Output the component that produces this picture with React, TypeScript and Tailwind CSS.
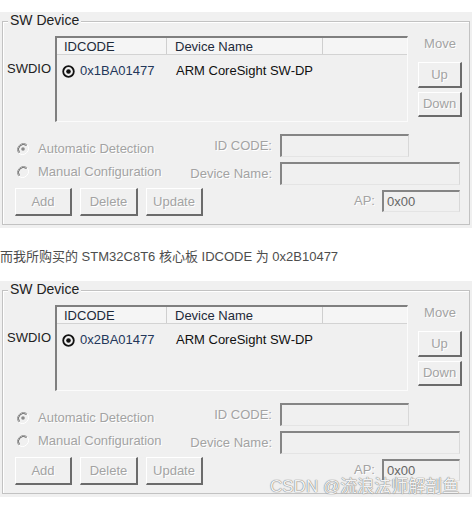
import React from 'react';

const sans = "font-['Liberation_Sans',Arial,sans-serif]";
const etched = '[text-shadow:1px_1px_0_#ffffff]';

function DisabledRadio({ checked }: { checked?: boolean }) {
  return (
    <svg width="12" height="12" viewBox="0 0 12 12" className="shrink-0">
      <path d="M10.2 1.8 A6 6 0 0 0 1.8 10.2" fill="none" stroke="#a0a0a0" strokeWidth="1" />
      <path d="M9.5 2.5 A5 5 0 0 0 2.5 9.5" fill="none" stroke="#6a6a6a" strokeWidth="1" />
      <path d="M10.2 1.8 A6 6 0 0 1 1.8 10.2" fill="none" stroke="#ffffff" strokeWidth="1" />
      {checked && <circle cx="6" cy="6" r="1.8" fill="#8a8a8a" />}
    </svg>
  );
}

function ListRadio() {
  return (
    <svg width="13" height="13" viewBox="0 0 13 13" className="shrink-0">
      <circle cx="6.5" cy="6.5" r="5.3" fill="none" stroke="#111" strokeWidth="1.8" />
      <circle cx="6.5" cy="6.5" r="2.3" fill="#111" />
    </svg>
  );
}

function WinButton({ label, className }: { label: string; className: string }) {
  return (
    <div
      className={`flex items-center justify-center bg-[#f0f0f0] border-t border-l border-t-white border-l-white border-b-2 border-r-2 border-b-[#6b6b6b] border-r-[#6b6b6b] text-[13px] text-[#a3a3a3] ${etched} ${className}`}
    >
      {label}
    </div>
  );
}

function TextBox({ className, value }: { className: string; value?: string }) {
  return (
    <div
      className={`flex items-center pl-[3px] bg-[#f0f0f0] border-t-2 border-l-2 border-t-[#858585] border-l-[#858585] border-b border-r border-b-[#e4e4e4] border-r-[#d8d8d8] text-[13px] text-[#666] ${className}`}
    >
      {value}
    </div>
  );
}

function DevicePanel({ idcode, watermark }: { idcode: string; watermark?: boolean }) {
  return (
    <div className={`relative w-[472px] h-[216px] bg-[#f0f0f0] pt-[9px] pl-[2px] ${sans}`}>
      <div className="relative w-[468px] h-[204px] border border-[#c2c2c2] shadow-[inset_1px_1px_0_#ffffff]">
        <span className="absolute left-[5px] top-[-10px] px-[2px] bg-[#f0f0f0] text-[14px] leading-[17px] text-[#222]">
          SW Device
        </span>

        {/* list + move buttons */}
        <div className="flex pt-[14px]">
          <div className="w-[52px] pl-[4px] pt-[25px] text-[13px] leading-[16px] text-[#222]">SWDIO</div>

          <div className="w-[353px] h-[86px] bg-[#f0f0f0] border-t-2 border-l-2 border-t-[#7f7f7f] border-l-[#7f7f7f] border-r border-b border-r-[#fbfbfb] border-b-[#fbfbfb]">
            <div className="flex h-[17px] border-b border-[#d3d3d3] bg-[#f5f5f5] text-[13px] text-[#1e2a3a]">
              <div className="w-[110px] pl-[7px] border-r border-[#cfcfcf] leading-[17px]">IDCODE</div>
              <div className="w-[156px] pl-[8px] border-r border-[#cfcfcf] leading-[17px]">Device Name</div>
              <div className="flex-1" />
            </div>
            <div className="flex items-center h-[18px] mt-[7px] text-[13px]">
              <div className="w-[110px] flex items-center pl-[5px] gap-[5px] text-[#23375a]">
                <ListRadio />
                {idcode}
              </div>
              <div className="pl-[9px] text-[#111]">ARM CoreSight SW-DP</div>
            </div>
          </div>

          <div className="ml-[10px] w-[44px] flex flex-col">
            <div className={`text-center text-[13px] leading-[16px] text-[#a3a3a3] ${etched}`}>Move</div>
            <WinButton label="Up" className="mt-[10px] h-[26px]" />
            <WinButton label="Down" className="mt-[4px] h-[25px]" />
          </div>
        </div>

        {/* detection options + fields */}
        <div className="flex">
          <div className="w-[200px] pl-[12px] pt-[15px]">
            <div className={`flex items-center gap-[9px] h-[23px] pl-[2px] text-[13px] text-[#a3a3a3] ${etched}`}>
              <DisabledRadio checked />
              Automatic Detection
            </div>
            <div className={`flex items-center gap-[9px] h-[23px] pl-[2px] text-[13px] text-[#a3a3a3] ${etched}`}>
              <DisabledRadio />
              Manual Configuration
            </div>
            <div className="flex gap-[8px] mt-[5px] h-[28px]">
              <WinButton label="Add" className="w-[57px]" />
              <WinButton label="Delete" className="w-[58px]" />
              <WinButton label="Update" className="w-[57px]" />
            </div>
          </div>

          <div className={`flex-1 flex flex-col pt-[12px] text-[13px] text-[#a3a3a3] ${etched}`}>
            <div className="flex items-center h-[23px] gap-[8px]">
              <div className="w-[69px] text-right">ID CODE:</div>
              <TextBox className="w-[129px] h-[23px]" />
            </div>
            <div className="flex items-center h-[23px] gap-[8px] mt-[5px]">
              <div className="w-[69px] text-right whitespace-nowrap flex justify-end">Device Name:</div>
              <TextBox className="w-[180px] h-[23px]" />
            </div>
            <div className="flex items-center justify-end h-[22px] gap-[7px] mt-[5px] pr-[9px]">
              <div>AP:</div>
              <TextBox className="w-[78px] h-[22px] [text-shadow:none]" value="0x00" />
            </div>
          </div>
        </div>
      </div>

      {watermark && (
        <div className="absolute left-[270px] top-[196px] text-[17px] leading-[20px] text-[#f2f2f2] font-['Liberation_Sans','Noto_Sans_CJK_SC',sans-serif] [text-shadow:0_0_1px_#6b6b6b,0_0_1px_#8a8a8a]">
          CSDN @流浪法师解剖鱼
        </div>
      )}
    </div>
  );
}

export default function App() {
  return (
    <div className="w-[474px] h-[507px] bg-white overflow-hidden">
      <div className="h-[12px]" />
      <DevicePanel idcode="0x1BA01477" />
      <div className="h-[53px] pt-[21px] text-[13px] leading-[16px] text-[#4d4d4d] font-['Liberation_Sans','Noto_Sans_CJK_SC',sans-serif] whitespace-nowrap">
        而我所购买的 STM32C8T6 核心板 IDCODE 为 0x2B10477
      </div>
      <DevicePanel idcode="0x2BA01477" watermark />
    </div>
  );
}
